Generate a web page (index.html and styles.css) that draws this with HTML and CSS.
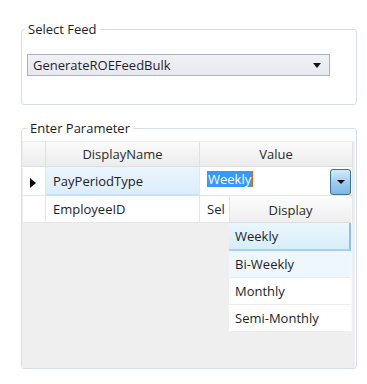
FILE: index.html
```html
<!DOCTYPE html>
<html>
<head>
<meta charset="utf-8">
<link rel="stylesheet" href="styles.css">
</head>
<body>
<fieldset class="group group-feed">
  <legend>Select Feed</legend>
  <div class="combo">
    <span class="combo-text">GenerateROEFeedBulk</span>
    <span class="combo-arrow"></span>
  </div>
</fieldset>
<fieldset class="group group-param">
  <legend>Enter Parameter</legend>
  <div class="grid">
    <div class="row header">
      <div class="cell rh"></div>
      <div class="cell c1">DisplayName</div>
      <div class="cell c2">Value</div>
    </div>
    <div class="row r1">
      <div class="cell rh"><span class="row-arrow"></span></div>
      <div class="cell c1 current">PayPeriodType</div>
      <div class="cell c2 edit"><span class="sel">Weekly</span><span class="caret"></span>
        <span class="drop-btn"><span class="drop-tri"></span></span>
      </div>
    </div>
    <div class="row r2">
      <div class="cell rh"></div>
      <div class="cell c1">EmployeeID</div>
      <div class="cell c2">Sel</div>
    </div>
    <div class="popup">
      <div class="p-head">Display</div>
      <div class="p-item p-active">Weekly</div>
      <div class="p-item p-hover">Bi-Weekly</div>
      <div class="p-item">Monthly</div>
      <div class="p-item">Semi-Monthly</div>
    </div>
  </div>
</fieldset>
</body>
</html>
```

FILE: styles.css
```css
* { box-sizing: border-box; }
html, body { margin: 0; padding: 0; background: #ffffff; }
body {
  font-family: "Open Sans", "Noto Sans", sans-serif;
  font-size: 13px;
  color: #1e1e2a;
  width: 367px;
  height: 384px;
  overflow: hidden;
}
.group {
  border: 1px solid #d5dfe6;
  border-radius: 3px;
  width: 336px;
  min-width: 0;
  margin: 0 0 0 21px;
}
.group legend {
  font-size: 13px;
  line-height: 16px;
  padding: 0 3px;
  margin-left: 0;
  color: #1e1e1e;
}
.group-feed {
  margin-top: 21px;
  padding: 0 5px 28px 5px;
}
.group-feed legend { margin-left: -2px; }
.combo {
  margin-top: 17px;
  width: 303px;
  height: 22px;
  border: 1px solid #adb2bf;
  background: linear-gradient(#f0f1f6, #e7e9f0);
  display: flex;
  align-items: center;
  justify-content: space-between;
  padding: 0 8px 0 5px;
}
.combo-text { line-height: 16px; color: #1e1e2a; }
.combo-arrow {
  width: 0; height: 0;
  border-left: 4px solid transparent;
  border-right: 4px solid transparent;
  border-top: 5px solid #111;
  margin-top: 1px;
}
.group-param {
  margin-top: 15px;
  padding: 0;
  height: 249px;
}
.group-param legend { margin-left: 5px; }
.grid {
  position: relative;
  margin-top: 5px;
  width: 333px;
  height: 227px;
  background: #efefef;
  padding: 1px 2px 0 1px;
}
.row { display: flex; }
.cell {
  border-right: 1px solid #e6e6e6;
  border-bottom: 1px solid #e6e6e6;
  background: #fff;
  display: flex;
  align-items: center;
}
.rh { width: 23px; justify-content: center; }
.c1 { width: 154px; padding-left: 7px; }
.c2 { width: 153px; padding-left: 7px; }
.header { height: 25px; }
.header .cell {
  background: linear-gradient(#fbfbfb, #ececec);
  justify-content: center;
  padding: 0;
  color: #2a2a2a;
  border-right: 1px solid #e0e0e0;
  border-bottom: 1px solid #dedede;
}
.r1 { height: 29px; }
.r2 { height: 27px; }
.row-arrow {
  width: 0; height: 0;
  border-top: 5px solid transparent;
  border-bottom: 5px solid transparent;
  border-left: 6px solid #000;
  margin-left: -2px;
  margin-top: 3px;
}
.current {
  background: linear-gradient(#eaf5fd, #dcedfa);
  border-bottom: 2px solid #c4e2f8;
}
.edit { position: relative; }
.sel {
  background: #3399ff;
  color: #fff;
  line-height: 16px;
  padding: 0 1px;
  margin-top: -4px;
}
.caret {
  width: 1px;
  height: 16px;
  background: #e06a00;
  margin-top: -4px;
}
.drop-btn {
  position: absolute;
  right: 1px;
  top: 2px;
  width: 21px;
  height: 26px;
  border: 1px solid #3b6f96;
  border-radius: 3px;
  background: linear-gradient(#d4eaf8, #9ccbee 55%, #7db8e6);
  display: flex;
  align-items: center;
  justify-content: center;
}
.drop-tri {
  width: 0; height: 0;
  border-left: 4px solid transparent;
  border-right: 4px solid transparent;
  border-top: 4px solid #000;
}
.popup {
  position: absolute;
  left: 207px;
  top: 56px;
  width: 122px;
  background: #efefef;
  display: flex;
  flex-direction: column;
  box-shadow: 1px 0 0 #f8f8f8;
}
.p-head {
  height: 26px;
  display: flex;
  align-items: center;
  justify-content: center;
  background: linear-gradient(#fdfdfd, #eeeeee);
  border-bottom: 1px solid #dcdcdc;
  border-left: 1px solid #e2e2e2;
  color: #2a2a2a;
}
.p-item {
  height: 27px;
  display: flex;
  align-items: center;
  padding-left: 6px;
  background: #fff;
  border-bottom: 1px solid #eeeeee;
}
.p-active {
  background: linear-gradient(#eaf6fd, #d7eefb);
  border-right: 2px solid #87bff0;
  border-bottom: 2px solid #a6d0f3;
  height: 28px;
}
.p-hover {
  background: #eef7fd;
  border-bottom: 1px solid #e4eef6;
}
```
